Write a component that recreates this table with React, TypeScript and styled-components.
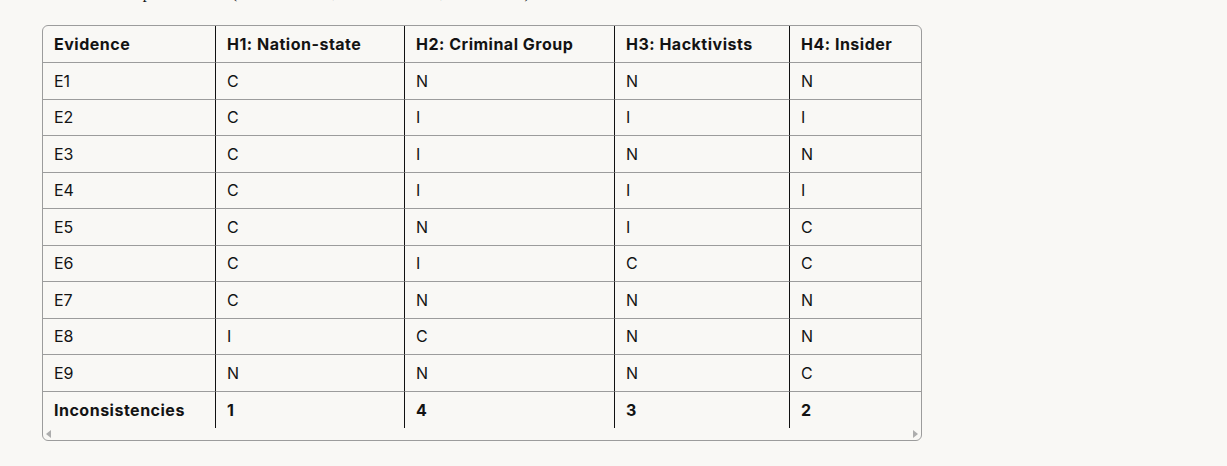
import React from "react";
import styled, { createGlobalStyle } from "styled-components";

const Global = createGlobalStyle`
  html, body { margin: 0; padding: 0; background: #f9f8f5; }
  body { overflow: hidden; }
`;

const Page = styled.div`
  padding: 0 42px;
  font-family: Inter, "Noto Sans", sans-serif;
  color: #1a1a1a;
`;

const Intro = styled.p`
  margin: -19px 0 20px 0;
  font-family: "Liberation Serif", serif;
  font-size: 16px;
  line-height: 24px;
  color: #1a1a1a;
  white-space: nowrap;
`;

const Frame = styled.div`
  width: 878px;
  border: 1px solid #9c9c9c;
  border-radius: 6px;
  overflow: hidden;
`;

const Table = styled.table`
  border-collapse: separate;
  border-spacing: 0;
  table-layout: fixed;
  width: 878px;
  font-size: 16px;
`;

const Cell = styled.td<{ $last?: boolean; $bottom?: boolean; $head?: boolean }>`
  box-sizing: border-box;
  padding: 0 0 0 11px;
  height: ${(p) => (p.$head ? "37px" : "36.5px")};
  text-align: left;
  vertical-align: middle;
  font-weight: ${(p) => (p.$head || p.$bottom ? 700 : 400)};
  letter-spacing: ${(p) => (p.$head || p.$bottom ? "0.5px" : "0")};
  border-right: ${(p) => (p.$last ? "none" : "1px solid #111")};
  border-bottom: ${(p) => (p.$bottom ? "none" : "1px solid #9c9c9c")};
  color: #131313;
  white-space: nowrap;
`;

const ScrollBar = styled.div`
  height: 12px;
  display: flex;
  align-items: center;
  justify-content: space-between;
  padding: 0 3px;
`;

const Arrow = styled.span<{ $dir: "left" | "right" }>`
  width: 0;
  height: 0;
  border-top: 4px solid transparent;
  border-bottom: 4px solid transparent;
  ${(p) =>
    p.$dir === "left"
      ? "border-right: 5px solid #adadad;"
      : "border-left: 5px solid #adadad;"}
`;

const widths = [173, 189, 210, 175, 131];
const headers = ["Evidence", "H1: Nation-state", "H2: Criminal Group", "H3: Hacktivists", "H4: Insider"];
const rows = [
  ["E1", "C", "N", "N", "N"],
  ["E2", "C", "I", "I", "I"],
  ["E3", "C", "I", "N", "N"],
  ["E4", "C", "I", "I", "I"],
  ["E5", "C", "N", "I", "C"],
  ["E6", "C", "I", "C", "C"],
  ["E7", "C", "N", "N", "N"],
  ["E8", "I", "C", "N", "N"],
  ["E9", "N", "N", "N", "C"],
];
const totals = ["Inconsistencies", "1", "4", "3", "2"];

export default function App() {
  return (
    <>
      <Global />
      <Page>
        <Intro>Here is the completed matrix (C = Consistent, I = Inconsistent, N = Neutral):</Intro>
        <Frame>
          <Table>
            <colgroup>
              {widths.map((w, i) => (
                <col key={i} style={{ width: w }} />
              ))}
            </colgroup>
            <thead>
              <tr>
                {headers.map((h, i) => (
                  <Cell as="th" key={i} $head $last={i === 4}>
                    {h}
                  </Cell>
                ))}
              </tr>
            </thead>
            <tbody>
              {rows.map((r, ri) => (
                <tr key={ri}>
                  {r.map((c, ci) => (
                    <Cell key={ci} $last={ci === 4}>
                      {c}
                    </Cell>
                  ))}
                </tr>
              ))}
              <tr>
                {totals.map((c, ci) => (
                  <Cell key={ci} $last={ci === 4} $bottom>
                    {c}
                  </Cell>
                ))}
              </tr>
            </tbody>
          </Table>
          <ScrollBar>
            <Arrow $dir="left" />
            <Arrow $dir="right" />
          </ScrollBar>
        </Frame>
      </Page>
    </>
  );
}
